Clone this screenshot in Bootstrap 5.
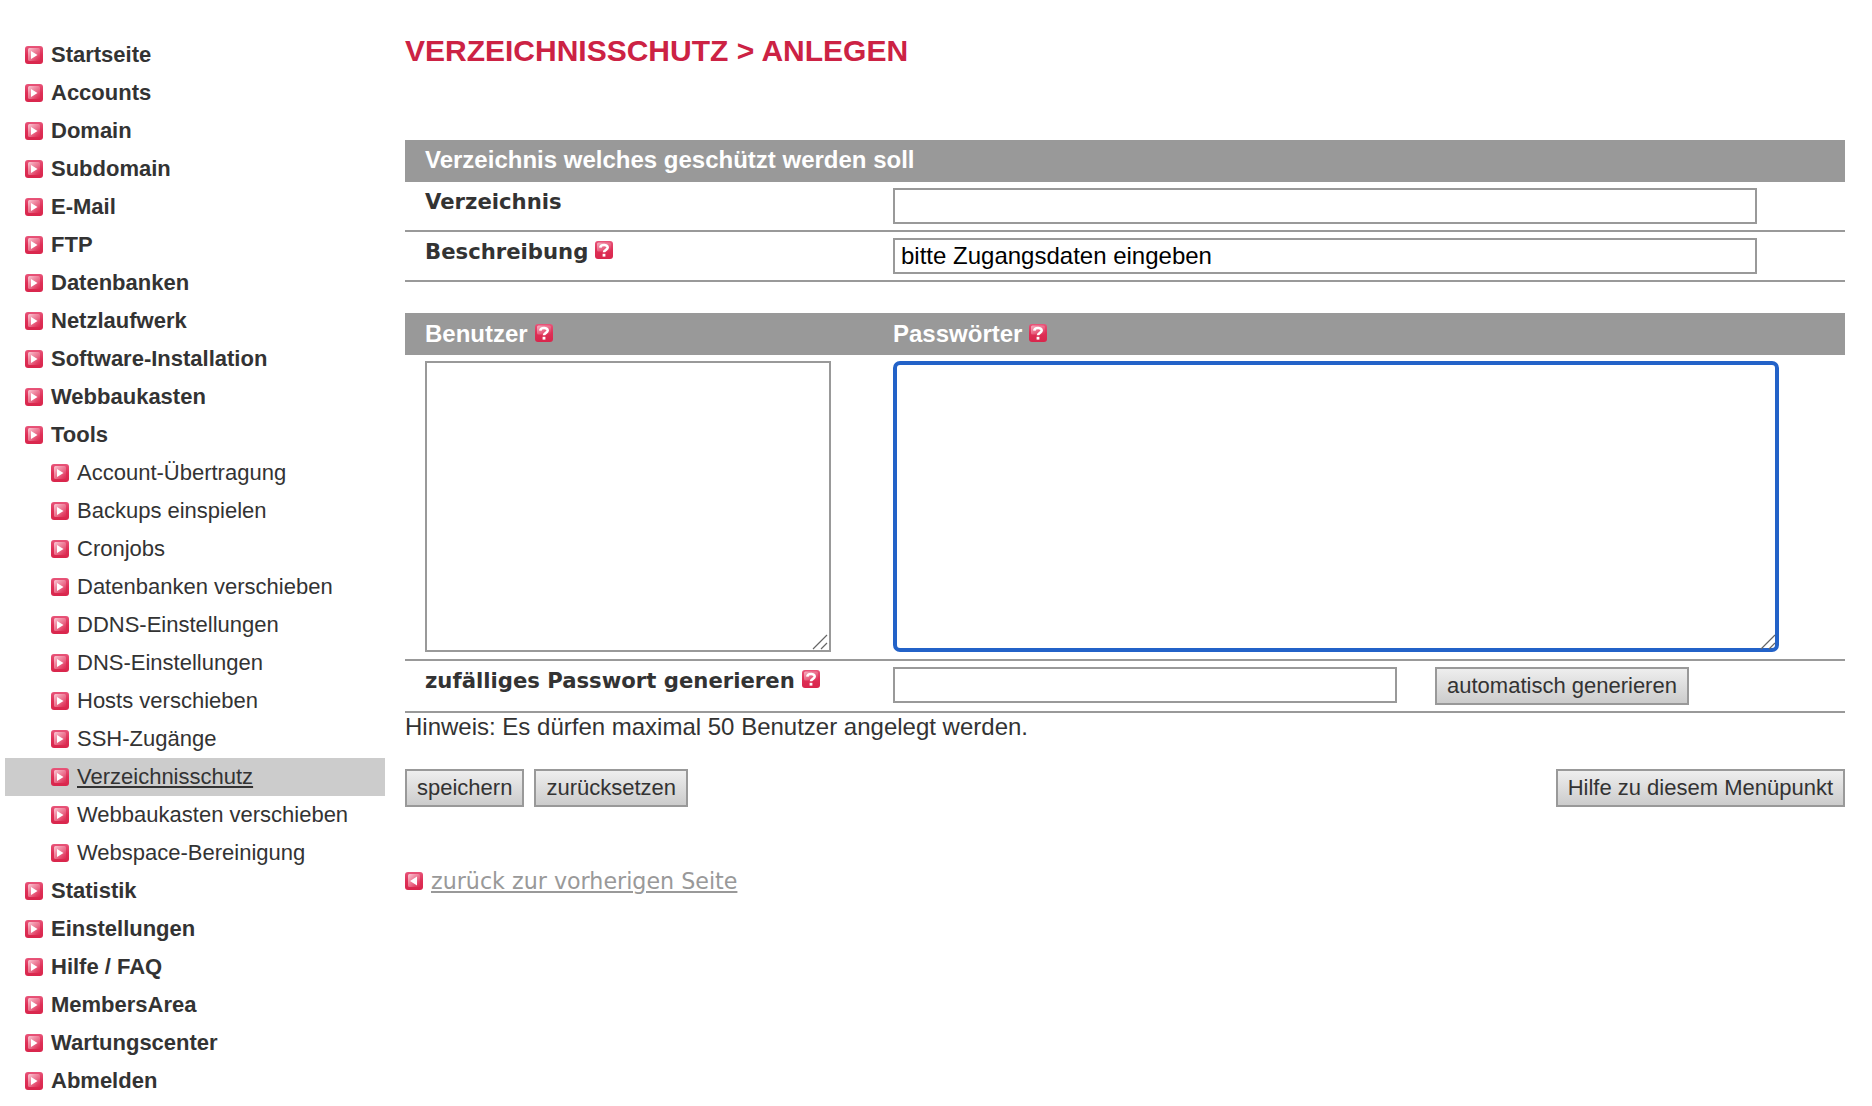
<!DOCTYPE html>
<html lang="de">
<head>
<meta charset="utf-8">
<title>Verzeichnisschutz anlegen</title>
<link href="https://cdn.jsdelivr.net/npm/bootstrap@5.3.0/dist/css/bootstrap.min.css" rel="stylesheet">
<style>
body{background:#fff;color:#333;font-family:"Liberation Sans",Arial,sans-serif;font-size:22px;line-height:38px;overflow:hidden}
.shell{padding:36px 27px 0 5px;gap:20px}
.sidenav{width:380px;flex:none;font-size:22px}
.sidenav a{color:#333;text-decoration:none}
.nav-item-row{height:38px;padding-left:20px;gap:8px}
.nav-top{font-weight:700}
.nav-sub{padding-left:46px}
.nav-active{background:#ccc}
.nav-active a{text-decoration:underline}
.ico{width:18px;height:18px;flex:none;display:block}
.content{flex:1;min-width:0}
.page-title{color:#cc2244;font-family:"Liberation Sans",Arial,sans-serif;font-size:30px;font-weight:700;line-height:36px;margin:-3px 0 71px}
.bar{background:#999;color:#fff;font-weight:700;height:42px;line-height:40px;font-size:24px}
.bar-pad{padding:0 20px}
.bar-item{gap:7px}
.bar-item .ico{margin-top:-3px}
.cell-l{width:488px;flex:none;padding-left:20px}
.cell-r{padding-top:6px}
.form-row-x{border-bottom:2px solid #999}
.lbl{font-family:"DejaVu Sans",Verdana,sans-serif;font-weight:700;font-size:21.2px;line-height:28px;color:#333;gap:7px;padding-top:6px}
.lbl .ico{margin-top:3px}
.row-48{height:48px}
.row-50{height:50px}
.fld{border:2px solid #999;border-radius:0;background:#fff;color:#000;font-family:"Liberation Sans",Arial,sans-serif;font-size:24px;height:36px;padding:0 6px;outline:0;display:block}
.fld-a{width:864px}
.fld-b{width:504px}
.ta-wrap{display:block;width:max-content}
.ta{display:block;border:2px solid #999;background:#fff;outline:0;height:291px;padding:2px;resize:none}
.ta-a{width:406px}
.ta-b{width:886px;border:4px solid #2362c8;border-radius:7px}
.grip{position:absolute;right:3px;bottom:2px;width:16px;height:16px;display:block}
.gbtn{border:2px solid #999;border-radius:0;background:linear-gradient(#eee,#ccc);color:#333;font-family:"Liberation Sans",Arial,sans-serif;font-size:22px;height:38px;line-height:32px;padding:0 10px}
.hint{line-height:28px;font-size:24px;height:30px}
.backlink{color:#999;font-family:"DejaVu Sans",Verdana,sans-serif;font-size:22.2px;text-decoration:underline}
.gaptop{margin-top:31px}
.ta-row{padding-top:6px;padding-bottom:7px}
.gen-gap{gap:38px}
.actions{margin-top:26px;gap:10px}
.back-row{margin-top:55px}
</style>
</head>
<body>
<svg width="0" height="0" class="position-absolute">
<defs>
<linearGradient id="rg" x1="0" y1="0" x2="0" y2="1"><stop offset="0" stop-color="#e8557a"/><stop offset=".5" stop-color="#de2f56"/><stop offset="1" stop-color="#d9264c"/></linearGradient>
<linearGradient id="hg" x1="0" y1="0" x2="1" y2="1"><stop offset="0" stop-color="#fbcdd8"/><stop offset=".6" stop-color="#ee7d98" stop-opacity=".7"/><stop offset="1" stop-color="#e23a60" stop-opacity=".2"/></linearGradient>
<symbol id="i-r" viewBox="0 0 18 18"><rect width="18" height="18" rx="3" fill="url(#rg)"/><rect x="3" y="2" width="12" height="13" rx="1.5" fill="url(#hg)"/><path d="M6 5l6.5 4L6 13z" fill="#fff"/></symbol>
<symbol id="i-l" viewBox="0 0 18 18"><rect width="18" height="18" rx="3" fill="url(#rg)"/><rect x="3" y="2" width="12" height="13" rx="1.5" fill="url(#hg)"/><path d="M12 4.5L5 9l7 4.5z" fill="#fff"/></symbol>
<symbol id="i-q" viewBox="0 0 18 18"><rect width="18" height="18" rx="3" fill="url(#rg)"/><rect x="2" y="1.5" width="14" height="9" rx="1.5" fill="url(#hg)" opacity=".8"/><path d="M5.3 6.6C5.5 3.4 12.7 3 12.7 6.6c0 2.1-3.7 2.3-3.7 4.6" fill="none" stroke="#fff" stroke-width="2.6"/><rect x="7.6" y="12.8" width="2.8" height="2.8" fill="#fff"/></symbol>
<symbol id="i-grip" viewBox="0 0 16 16"><path d="M1 15L15 1M9 15l6-6" stroke="#666" stroke-width="1.2" fill="none"/></symbol>
</defs>
</svg>
<div class="shell d-flex">
<nav class="sidenav">
<ul class="list-unstyled m-0">
<li class="nav-item-row nav-top d-flex align-items-center"><svg class="ico"><use href="#i-r"/></svg><a href="#">Startseite</a></li>
<li class="nav-item-row nav-top d-flex align-items-center"><svg class="ico"><use href="#i-r"/></svg><a href="#">Accounts</a></li>
<li class="nav-item-row nav-top d-flex align-items-center"><svg class="ico"><use href="#i-r"/></svg><a href="#">Domain</a></li>
<li class="nav-item-row nav-top d-flex align-items-center"><svg class="ico"><use href="#i-r"/></svg><a href="#">Subdomain</a></li>
<li class="nav-item-row nav-top d-flex align-items-center"><svg class="ico"><use href="#i-r"/></svg><a href="#">E-Mail</a></li>
<li class="nav-item-row nav-top d-flex align-items-center"><svg class="ico"><use href="#i-r"/></svg><a href="#">FTP</a></li>
<li class="nav-item-row nav-top d-flex align-items-center"><svg class="ico"><use href="#i-r"/></svg><a href="#">Datenbanken</a></li>
<li class="nav-item-row nav-top d-flex align-items-center"><svg class="ico"><use href="#i-r"/></svg><a href="#">Netzlaufwerk</a></li>
<li class="nav-item-row nav-top d-flex align-items-center"><svg class="ico"><use href="#i-r"/></svg><a href="#">Software-Installation</a></li>
<li class="nav-item-row nav-top d-flex align-items-center"><svg class="ico"><use href="#i-r"/></svg><a href="#">Webbaukasten</a></li>
<li class="nav-item-row nav-top d-flex align-items-center"><svg class="ico"><use href="#i-r"/></svg><a href="#">Tools</a></li>
<li class="nav-item-row nav-sub d-flex align-items-center"><svg class="ico"><use href="#i-r"/></svg><a href="#">Account-Übertragung</a></li>
<li class="nav-item-row nav-sub d-flex align-items-center"><svg class="ico"><use href="#i-r"/></svg><a href="#">Backups einspielen</a></li>
<li class="nav-item-row nav-sub d-flex align-items-center"><svg class="ico"><use href="#i-r"/></svg><a href="#">Cronjobs</a></li>
<li class="nav-item-row nav-sub d-flex align-items-center"><svg class="ico"><use href="#i-r"/></svg><a href="#">Datenbanken verschieben</a></li>
<li class="nav-item-row nav-sub d-flex align-items-center"><svg class="ico"><use href="#i-r"/></svg><a href="#">DDNS-Einstellungen</a></li>
<li class="nav-item-row nav-sub d-flex align-items-center"><svg class="ico"><use href="#i-r"/></svg><a href="#">DNS-Einstellungen</a></li>
<li class="nav-item-row nav-sub d-flex align-items-center"><svg class="ico"><use href="#i-r"/></svg><a href="#">Hosts verschieben</a></li>
<li class="nav-item-row nav-sub d-flex align-items-center"><svg class="ico"><use href="#i-r"/></svg><a href="#">SSH-Zugänge</a></li>
<li class="nav-item-row nav-sub nav-active d-flex align-items-center"><svg class="ico"><use href="#i-r"/></svg><a href="#">Verzeichnisschutz</a></li>
<li class="nav-item-row nav-sub d-flex align-items-center"><svg class="ico"><use href="#i-r"/></svg><a href="#">Webbaukasten verschieben</a></li>
<li class="nav-item-row nav-sub d-flex align-items-center"><svg class="ico"><use href="#i-r"/></svg><a href="#">Webspace-Bereinigung</a></li>
<li class="nav-item-row nav-top d-flex align-items-center"><svg class="ico"><use href="#i-r"/></svg><a href="#">Statistik</a></li>
<li class="nav-item-row nav-top d-flex align-items-center"><svg class="ico"><use href="#i-r"/></svg><a href="#">Einstellungen</a></li>
<li class="nav-item-row nav-top d-flex align-items-center"><svg class="ico"><use href="#i-r"/></svg><a href="#">Hilfe / FAQ</a></li>
<li class="nav-item-row nav-top d-flex align-items-center"><svg class="ico"><use href="#i-r"/></svg><a href="#">MembersArea</a></li>
<li class="nav-item-row nav-top d-flex align-items-center"><svg class="ico"><use href="#i-r"/></svg><a href="#">Wartungscenter</a></li>
<li class="nav-item-row nav-top d-flex align-items-center"><svg class="ico"><use href="#i-r"/></svg><a href="#">Abmelden</a></li>
</ul>
</nav>
<main class="content">
<h1 class="page-title text-uppercase">Verzeichnisschutz &gt; anlegen</h1>
<div class="bar bar-pad">Verzeichnis welches geschützt werden soll</div>
<div class="form-row-x d-flex">
<div class="cell-l lbl row-48 d-flex">Verzeichnis</div>
<div class="cell-r"><input class="fld fld-a" type="text"></div>
</div>
<div class="form-row-x d-flex">
<div class="cell-l lbl row-48 d-flex"><span>Beschreibung</span><svg class="ico"><use href="#i-q"/></svg></div>
<div class="cell-r"><input class="fld fld-a" type="text" value="bitte Zugangsdaten eingeben"></div>
</div>
<div class="bar d-flex align-items-center gaptop">
<div class="cell-l bar-item d-flex align-items-center"><span>Benutzer</span><svg class="ico"><use href="#i-q"/></svg></div>
<div class="bar-item d-flex align-items-center"><span>Passwörter</span><svg class="ico"><use href="#i-q"/></svg></div>
</div>
<div class="form-row-x d-flex ta-row">
<div class="cell-l"><div class="ta-wrap position-relative"><textarea class="ta ta-a"></textarea><svg class="grip"><use href="#i-grip"/></svg></div></div>
<div><div class="ta-wrap position-relative"><textarea class="ta ta-b"></textarea><svg class="grip"><use href="#i-grip"/></svg></div></div>
</div>
<div class="form-row-x d-flex">
<div class="cell-l lbl row-50 d-flex text-nowrap"><span>zufälliges Passwort generieren</span><svg class="ico"><use href="#i-q"/></svg></div>
<div class="cell-r d-flex align-items-start gen-gap"><input class="fld fld-b" type="text"><button class="gbtn btn" type="button">automatisch generieren</button></div>
</div>
<div class="hint">Hinweis: Es dürfen maximal 50 Benutzer angelegt werden.</div>
<div class="d-flex actions">
<button class="gbtn btn" type="button">speichern</button>
<button class="gbtn btn" type="button">zurücksetzen</button>
<button class="gbtn btn ms-auto" type="button">Hilfe zu diesem Menüpunkt</button>
</div>
<div class="d-flex align-items-center back-row gap-2"><svg class="ico"><use href="#i-l"/></svg><a class="backlink" href="#">zurück zur vorherigen Seite</a></div>
</main>
</div>
</body>
</html>
